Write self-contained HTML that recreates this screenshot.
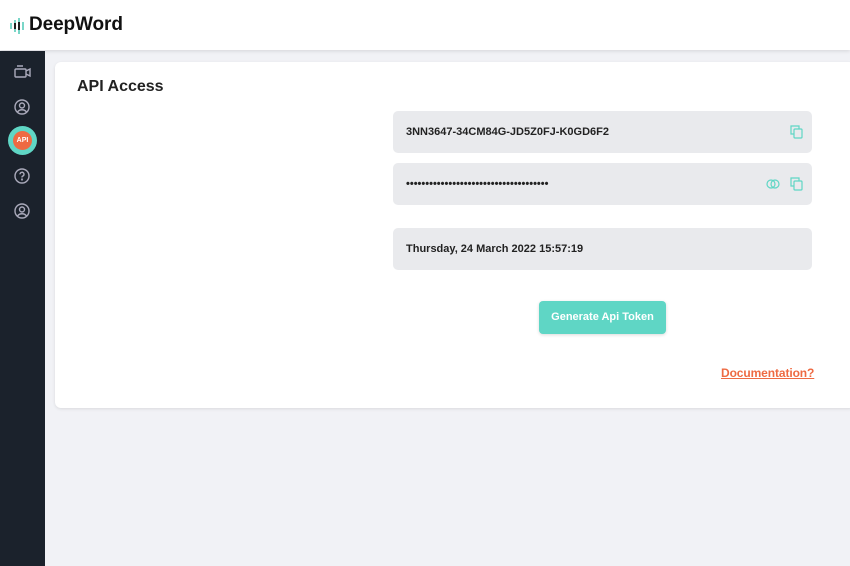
<!DOCTYPE html>
<html><head><style>
*{margin:0;padding:0;box-sizing:border-box}
body{width:850px;height:566px;overflow:hidden;background:#f1f2f6;font-family:"Liberation Sans",sans-serif;position:relative}
.top{position:absolute;left:0;top:0;width:850px;height:50px;background:#fff;box-shadow:0 1px 4px rgba(0,0,0,.12)}
.logo{position:absolute;left:29px;top:14px;font-size:19px;font-weight:bold;color:#111;letter-spacing:-.1px}
.side{position:absolute;left:0;top:51px;width:45px;height:515px;background:#1b222c}
.card{position:absolute;left:55px;top:62px;width:800px;height:346px;background:#fff;border-radius:6px;box-shadow:0 1px 3px rgba(0,0,0,.1)}
h1{position:absolute;left:77px;top:78px;font-size:16px;color:#222}
.field{position:absolute;left:393px;width:419px;height:42px;background:#e9eaed;border-radius:5px;font-size:11px;font-weight:bold;color:#222;padding:0 0 0 13px;line-height:42px}
.btn{position:absolute;left:539px;top:301px;width:127px;height:33px;background:#5fd6c5;border-radius:4px;color:#fff;font-size:11px;font-weight:bold;text-align:center;line-height:33px;box-shadow:0 1px 3px rgba(0,0,0,.15)}
.doc{position:absolute;left:721px;top:366px;font-size:12px;font-weight:bold;color:#ee6a42;text-decoration:underline;letter-spacing:-.1px}
.ic{position:absolute;left:14px}
</style></head><body>
<div class="top">
<svg style="position:absolute;left:10px;top:18px" width="16" height="16"><g fill="#7ad6c8"><rect x="0" y="5" width="2" height="6"/><rect x="4" y="2" width="2" height="12"/><rect x="8" y="0" width="2" height="16"/><rect x="12" y="4" width="2" height="8"/></g><g fill="#222"><rect x="4" y="5" width="2" height="6"/><rect x="8" y="4" width="2" height="8"/></g></svg>
<div class="logo">DeepWord</div></div>
<div class="side">
<svg class="ic" style="top:14px" width="17" height="14" fill="none" stroke="#aab" stroke-width="1.4"><rect x="1" y="4" width="11" height="8" rx="1"/><path d="M12 6l4-2v7l-4-2M3 1h6"/></svg>
<svg class="ic" style="top:48px" width="16" height="16" fill="none" stroke="#aab" stroke-width="1.4"><circle cx="8" cy="8" r="7"/><circle cx="8" cy="6.5" r="2.5"/><path d="M3.5 13c2-3 7-3 9 0"/></svg>
<div style="position:absolute;left:8px;top:75px;width:29px;height:29px;border-radius:50%;background:#5fd6c5"><div style="position:absolute;left:5px;top:5px;width:19px;height:19px;border-radius:50%;background:#ee6a42;color:#fff;font-size:7px;font-weight:bold;text-align:center;line-height:19px">API</div></div>
<svg class="ic" style="top:117px" width="16" height="16" fill="none" stroke="#aab" stroke-width="1.4"><circle cx="8" cy="8" r="7"/><path d="M6 6.3a2 2 0 1 1 2.5 1.9c-.5.2-.5.6-.5 1.3"/><circle cx="8" cy="11.5" r=".4"/></svg>
<svg class="ic" style="top:152px" width="16" height="16" fill="none" stroke="#aab" stroke-width="1.4"><circle cx="8" cy="8" r="7"/><circle cx="8" cy="6.5" r="2.5"/><path d="M3.5 13c2-3 7-3 9 0"/></svg>
</div>
<div class="card"></div>
<h1>API Access</h1>
<div class="field" style="top:111px">3NN3647-34CM84G-JD5Z0FJ-K0GD6F2
<svg style="position:absolute;right:9px;top:14px" width="13" height="14" fill="none" stroke="#5fd6c5" stroke-width="1.2"><rect x="4" y="4" width="8" height="9" rx="1"/><path d="M4 9H1V1h8v3"/></svg></div>
<div class="field" style="top:163px;font-size:11px">•••••••••••••••••••••••••••••••••••••
<svg style="position:absolute;right:32px;top:16px" width="14" height="10" fill="none" stroke="#5fd6c5" stroke-width="1.2"><circle cx="5" cy="5" r="4"/><circle cx="9" cy="5" r="4"/></svg>
<svg style="position:absolute;right:9px;top:14px" width="13" height="14" fill="none" stroke="#5fd6c5" stroke-width="1.2"><rect x="4" y="4" width="8" height="9" rx="1"/><path d="M4 9H1V1h8v3"/></svg></div>
<div class="field" style="top:228px">Thursday, 24 March 2022 15:57:19</div>
<div class="btn">Generate Api Token</div>
<div class="doc">Documentation?</div>
</body></html>
